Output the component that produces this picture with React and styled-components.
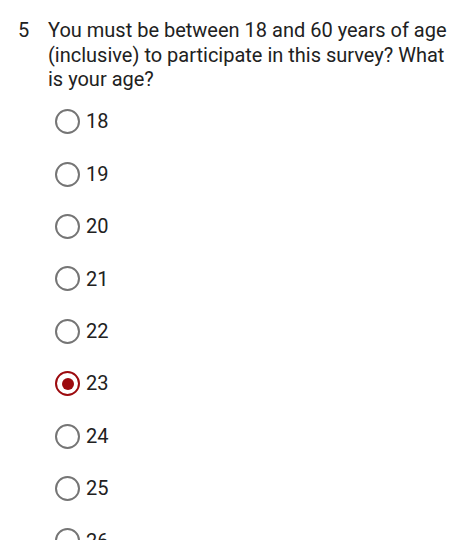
import React, { useState } from "react";
import styled, { createGlobalStyle } from "styled-components";

const Global = createGlobalStyle`
  html, body { margin: 0; padding: 0; background: #ffffff; }
  body { font-family: Roboto, "Noto Sans", Arial, sans-serif; color: #212121; }
`;

const Page = styled.div`
  width: 474px;
  height: 540px;
  overflow: hidden;
  box-sizing: border-box;
  padding: 18px 18px 0 18px;
`;

const Question = styled.div`
  display: grid;
  grid-template-columns: 30px 1fr;
  font-size: 20px;
  line-height: 24.5px;
  color: #212121;
`;

const Number = styled.div``;

const Prompt = styled.div``;

const Options = styled.div`
  display: flex;
  flex-direction: column;
  margin-top: 4px;
  padding-left: 37px;
`;

const Row = styled.label`
  display: flex;
  align-items: center;
  height: 52.4px;
  cursor: pointer;
`;

const Circle = styled.span`
  box-sizing: border-box;
  width: 25px;
  height: 25px;
  border-radius: 50%;
  border: 2.6px solid ${(p) => (p.$checked ? "#9c0a0e" : "#757575")};
  display: flex;
  align-items: center;
  justify-content: center;
  flex-shrink: 0;
`;

const Dot = styled.span`
  width: 12px;
  height: 12px;
  border-radius: 50%;
  background: #9c0a0e;
`;

const Label = styled.span`
  margin-left: 6px;
  font-size: 20px;
  line-height: 24.5px;
  color: #212121;
`;

const ages = [18, 19, 20, 21, 22, 23, 24, 25, 26];

export default function App() {
  const [value, setValue] = useState(23);
  return (
    <Page>
      <Global />
      <Question>
        <Number>5</Number>
        <Prompt>
          You must be between 18 and 60 years of age (inclusive) to participate
          in this survey? What is your age?
        </Prompt>
      </Question>
      <Options>
        {ages.map((a) => (
          <Row key={a} onClick={() => setValue(a)}>
            <Circle $checked={value === a}>{value === a && <Dot />}</Circle>
            <Label>{a}</Label>
          </Row>
        ))}
      </Options>
    </Page>
  );
}
